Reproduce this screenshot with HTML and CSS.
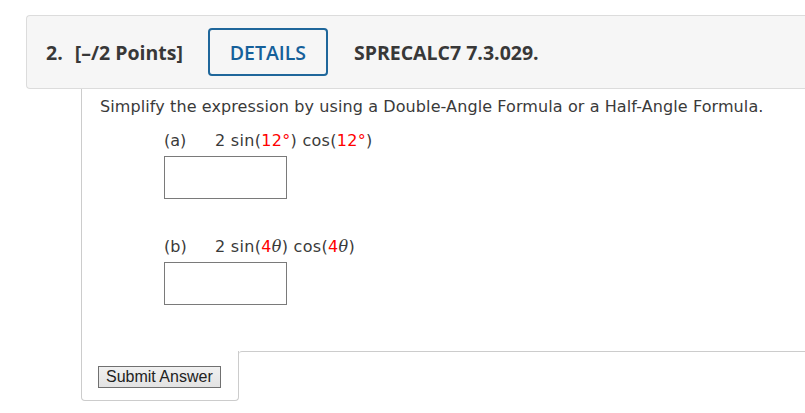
FILE: index.html
```html
<!DOCTYPE html>
<html>
<head>
<meta charset="utf-8">
<link rel="stylesheet" href="styles.css">
</head>
<body>
<div class="page">
  <div class="header">
    <span class="qnum">2.</span>
    <span class="points">[–/2 Points]</span>
    <button class="details">DETAILS</button>
    <span class="code">SPRECALC7 7.3.029.</span>
  </div>
  <div class="question">
    <div class="content">
      <p class="prompt">Simplify the expression by using a Double-Angle Formula or a Half-Angle Formula.</p>
      <div class="part">
        <div class="part-line"><span class="label">(a)</span><span class="math">2 sin(<span class="red">12°</span>) cos(<span class="red">12°</span>)</span></div>
        <div class="answer"></div>
      </div>
      <div class="part">
        <div class="part-line"><span class="label">(b)</span><span class="math">2 sin(<span class="red">4</span><i>θ</i>) cos(<span class="red">4</span><i>θ</i>)</span></div>
        <div class="answer"></div>
      </div>
    </div>
    <div class="footer">
      <div class="submit-box"><button class="submit">Submit Answer</button></div>
      <div class="footer-rest"></div>
    </div>
  </div>
</div>
</body>
</html>
```

FILE: styles.css
```css
html, body { margin: 0; padding: 0; background: #fff; }
.page { padding: 15px 0 0 26px; overflow: hidden; }
.header {
  display: flex;
  align-items: center;
  height: 72px;
  width: 820px;
  background: #f6f6f6;
  border: 1px solid #dcdcdc;
  border-right: none;
  border-radius: 4px 0 0 4px;
  padding-left: 19px;
  box-sizing: content-box;
  font-family: "Open Sans", sans-serif;
  font-weight: 700;
  font-size: 19.5px;
  color: #383838;
}
.qnum { margin-right: 12px; }
.points { margin-right: 25px; }
.details {
  width: 120px;
  height: 48px;
  border: 2px solid #1f679b;
  border-radius: 4px;
  background: #f6f6f6;
  color: #15609a;
  font-family: "Open Sans", sans-serif;
  font-weight: 600;
  font-size: 19.5px;
  padding: 0;
  margin-right: 26px;
}
.question { margin-left: 55px; }
.content {
  border-left: 1px solid #cccccc;
  padding: 8px 0 0 18px;
  font-family: "DejaVu Sans", Verdana, sans-serif;
  font-size: 16px;
  color: #3a3a3a;
  height: 254px;
}
.prompt { margin: 0 0 14px 0; line-height: 20px; letter-spacing: 0.1px; }
.part { margin-left: 64px; }
.part + .part { margin-top: 38px; }
.part-line { line-height: 20px; display: flex; }
.label { width: 51px; }
.math { letter-spacing: 0.3px; }
.red { color: #ff0000; }
.math i { font-family: "DejaVu Serif", serif; }
.answer {
  width: 121px;
  height: 41px;
  border: 1px solid #7a7a7a;
  margin-top: 5px;
}
.footer { display: flex; }
.submit-box {
  width: 158px;
  height: 50px;
  border: 1px solid #cccccc;
  border-top: none;
  border-radius: 0 0 4px 4px;
  padding: 15px 0 0 16px;
  box-sizing: border-box;
}
.footer-rest { flex: 1; border-top: 1px solid #cccccc; border-top-left-radius: 3px; }
.submit {
  font-family: "Liberation Sans", Arial, sans-serif;
  font-size: 16px;
  color: #222;
  background: linear-gradient(#f0f0f0, #e3e3e3);
  border: 1px solid #707070;
  padding: 1px 7px;
  height: 22px;
  line-height: 18px;
  border-radius: 0;
}
```
